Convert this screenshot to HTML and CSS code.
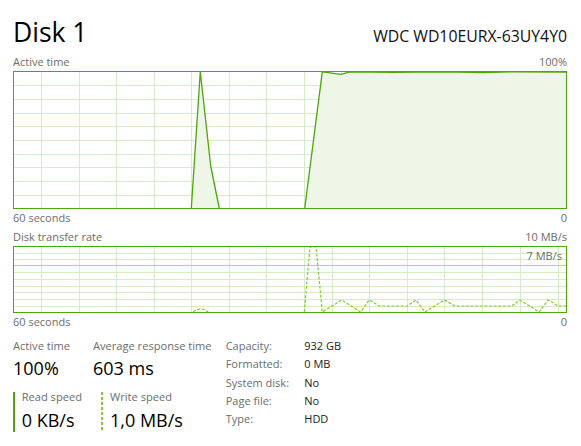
FILE: index.html
```html
<!DOCTYPE html>
<html>
<head>
<meta charset="utf-8">
<link rel="stylesheet" href="styles.css">
</head>
<body>
<div class="page">
  <div class="head">
    <div class="title">Disk 1</div>
    <div class="model">WDC WD10EURX-63UY4Y0</div>
  </div>
  <div class="lrow top"><span>Active time</span><span>100%</span></div>
  <div class="chart">
    <svg width="554" height="138" viewBox="0 0 554 138">
      <path class="grid" d="M28.5 0V138M66.5 0V138M103.5 0V138M141.5 0V138M178.5 0V138M216.5 0V138M253.5 0V138M291.5 0V138M328.5 0V138M366.5 0V138M403.5 0V138M441.5 0V138M478.5 0V138M516.5 0V138M0 14.5H554M0 28.5H554M0 42.5H554M0 55.5H554M0 69.5H554M0 83.5H554M0 96.5H554M0 110.5H554M0 124.5H554"/>
      <path class="fill" d="M178.3 137L187.3 0.8L197.7 95L206.3 137ZM291.7 137L309.3 0.8L328 3.3L337 0.8L380 1.3L430 0.8L470 1.6L500 0.8L553 1L553 137Z"/>
      <path class="line" d="M178.3 137.5L187.3 0.8L197.7 95L206.3 137.5M291.7 137.5L309.3 0.8L328 3.3L337 0.8L380 1.3L430 0.8L470 1.6L500 0.8L553 1"/>
      <rect class="frame" x="0.5" y="0.5" width="553" height="137"/>
    </svg>
  </div>
  <div class="lrow after"><span>60 seconds</span><span>0</span></div>
  <div class="lrow second"><span>Disk transfer rate</span><span>10 MB/s</span></div>
  <div class="chart small">
    <svg width="554" height="67" viewBox="0 0 554 67">
      <path class="grid" d="M28.5 0V67M66.5 0V67M103.5 0V67M141.5 0V67M178.5 0V67M216.5 0V67M253.5 0V67M291.5 0V67M319.5 0V67M356.5 0V67M394.5 0V67M431.5 0V67M469.5 0V67M507.5 0V67M545.5 0V67M0 7.5H554M0 13.5H554M0 26.5H554M0 33.5H554M0 40.5H554M0 46.5H554M0 53.5H554M0 60.5H554"/>
      <path class="scale" d="M0 19.5H554"/>
      <path class="dash" d="M180.3 66Q187.8 60 195.3 66"/>
      <path class="dash" d="M291.3 66L297 0.8L303 0.8L309.3 66L328.7 54L347.7 66L356.3 54L366.3 60L394.3 60L403 54L412 66L431.3 54L442 60L498.7 60L507 54L526 66L535.3 54L545.3 60L553 60"/>
      <rect class="frame" x="0.5" y="0.5" width="553" height="66"/>
    </svg>
    <span class="scale-label">7 MB/s</span>
  </div>
  <div class="lrow after"><span>60 seconds</span><span>0</span></div>

  <div class="stats">
    <div class="left">
      <div class="srow">
        <div class="stat first">
          <div class="slabel">Active time</div>
          <div class="sval">100%</div>
        </div>
        <div class="stat">
          <div class="slabel">Average response time</div>
          <div class="sval">603 ms</div>
        </div>
      </div>
      <div class="srow speeds">
        <div class="speed read">
          <div class="slabel tight">Read speed</div>
          <div class="sval v2">0 KB/s</div>
        </div>
        <div class="speed write">
          <div class="slabel tight">Write speed</div>
          <div class="sval v2">1,0 MB/s</div>
        </div>
      </div>
    </div>
    <div class="info">
      <span class="k">Capacity:</span><span class="v">932 GB</span>
      <span class="k">Formatted:</span><span class="v">0 MB</span>
      <span class="k">System disk:</span><span class="v">No</span>
      <span class="k">Page file:</span><span class="v">No</span>
      <span class="k">Type:</span><span class="v">HDD</span>
    </div>
  </div>
</div>
</body>
</html>
```
FILE: styles.css
```css
html, body {
  margin: 0;
  padding: 0;
  background: #ffffff;
}
body {
  font-family: "Open Sans", "Noto Sans", sans-serif;
  color: #1a1a1a;
  width: 581px;
  height: 446px;
  overflow: hidden;
}
.page {
  padding: 0 14px 0 13px;
}
.head {
  display: flex;
  justify-content: space-between;
  align-items: baseline;
  padding-top: 15px;
  height: 40px;
}
.title {
  font-size: 26.5px;
  line-height: 34px;
  color: #000;
}
.model {
  font-size: 15.8px;
  line-height: 20px;
  color: #111;
}
.lrow {
  display: flex;
  justify-content: space-between;
  font-size: 11px;
  line-height: 14px;
  color: #6d6d6d;
}
.lrow.after { margin-top: 2px; }
.lrow.second { margin-top: 5px; }
.chart {
  margin-top: 2px;
  position: relative;
  width: 554px;
}
.chart svg { display: block; }
.grid {
  stroke: #d6ebc7;
  stroke-width: 1;
  fill: none;
  shape-rendering: crispEdges;
}
.scale {
  stroke: #a8da90;
  stroke-width: 1;
  shape-rendering: crispEdges;
}
.fill { fill: #eef6e7; stroke: none; }
.line {
  fill: none;
  stroke: #4da60c;
  stroke-width: 1.3;
  stroke-linejoin: round;
}
.dash {
  fill: none;
  stroke: #86c930;
  stroke-width: 1.2;
  stroke-dasharray: 3 1.6;
}
.frame {
  fill: none;
  stroke: #4da60c;
  stroke-width: 1;
}
.scale-label {
  position: absolute;
  right: 5px;
  top: 3px;
  font-size: 11px;
  line-height: 14px;
  color: #6d6d6d;
}
.stats {
  display: flex;
  margin-top: 10px;
}
.left { width: 212.7px; }
.srow { display: flex; }
.stat.first { width: 80px; }
.slabel {
  font-size: 11.1px;
  line-height: 14px;
  color: #6d6d6d;
  white-space: nowrap;
}
.slabel.tight { line-height: 10px; }
.sval {
  font-size: 18px;
  line-height: 24px;
  margin-top: 3px;
  color: #000;
  white-space: nowrap;
}
.sval.v2 { margin-top: 6px; }
.speeds { margin-top: 12px; }
.speed.read {
  width: 79.3px;
  border-left: 2px solid #4da60c;
  padding-left: 6.7px;
}
.speed.write {
  padding-left: 9px;
  background: repeating-linear-gradient(to bottom, #86c930 0 3px, transparent 3px 5px) left top / 2px 100% no-repeat;
}
.info {
  display: grid;
  grid-template-columns: 78.6px auto;
  grid-auto-rows: 18.25px;
  font-size: 11px;
  line-height: 18.25px;
  margin-top: -2px;
}
.info .k { color: #6d6d6d; }
.info .v { color: #1a1a1a; }
```
